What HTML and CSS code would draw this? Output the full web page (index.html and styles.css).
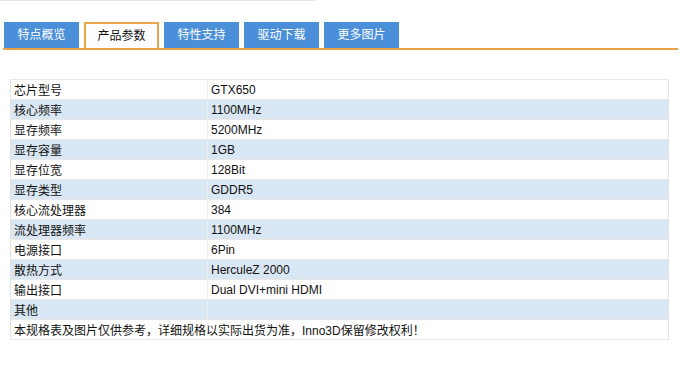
FILE: index.html
```html
<!DOCTYPE html>
<html lang="zh-CN">
<head>
<meta charset="utf-8">
<title>产品参数</title>
<link rel="stylesheet" href="styles.css">
</head>
<body>
<div class="topline"></div>
<nav class="tabs">
  <span class="tab">特点概览</span>
  <span class="tab active">产品参数</span>
  <span class="tab">特性支持</span>
  <span class="tab">驱动下载</span>
  <span class="tab">更多图片</span>
</nav>
<table class="spec">
  <tr><td class="k">芯片型号</td><td>GTX650</td></tr>
  <tr class="alt"><td class="k">核心频率</td><td>1100MHz</td></tr>
  <tr><td class="k">显存频率</td><td>5200MHz</td></tr>
  <tr class="alt"><td class="k">显存容量</td><td>1GB</td></tr>
  <tr><td class="k">显存位宽</td><td>128Bit</td></tr>
  <tr class="alt"><td class="k">显存类型</td><td>GDDR5</td></tr>
  <tr><td class="k">核心流处理器</td><td>384</td></tr>
  <tr class="alt"><td class="k">流处理器频率</td><td>1100MHz</td></tr>
  <tr><td class="k">电源接口</td><td>6Pin</td></tr>
  <tr class="alt"><td class="k">散热方式</td><td>HerculeZ 2000</td></tr>
  <tr><td class="k">输出接口</td><td>Dual DVI+mini HDMI</td></tr>
  <tr class="alt"><td class="k">其他</td><td></td></tr>
  <tr><td colspan="2">本规格表及图片仅供参考，详细规格以实际出货为准，Inno3D保留修改权利！</td></tr>
</table>
</body>
</html>
```
FILE: styles.css
```css
html, body {
  margin: 0;
  padding: 0;
  background: #fff;
}
body {
  font-family: "Liberation Sans", "Noto Sans CJK SC", sans-serif;
  font-size: 12px;
  color: #111;
}
.topline {
  width: 315px;
  height: 1px;
  background: #e4e4e4;
}
.tabs {
  display: flex;
  gap: 5px;
  margin: 21px 0 0 3px;
  padding-left: 1px;
  width: 674px;
  border-bottom: 2px solid #e8a243;
}
.tab {
  box-sizing: border-box;
  width: 75px;
  height: 26px;
  line-height: 26px;
  text-align: center;
  background: #4a8fd8;
  color: #fff;
  font-size: 12px;
}
.tab.active {
  background: #fff;
  color: #111;
  border: 2px solid #eba649;
  border-bottom: none;
  line-height: 24px;
}
.spec {
  margin: 29px 0 0 10px;
  width: 659px;
  border-collapse: collapse;
  border: 1px solid #e2e2e2;
}
.spec td {
  height: 19px;
  padding: 0 0 0 3px;
  border: 1px solid #e8e8e8;
  border-left: none;
  border-right: none;
  white-space: nowrap;
  vertical-align: middle;
}
.spec td.k {
  width: 193px;
  border-right: 1px solid #ececec;
}
.spec tr.alt td {
  background: #d9e6f3;
}
```
